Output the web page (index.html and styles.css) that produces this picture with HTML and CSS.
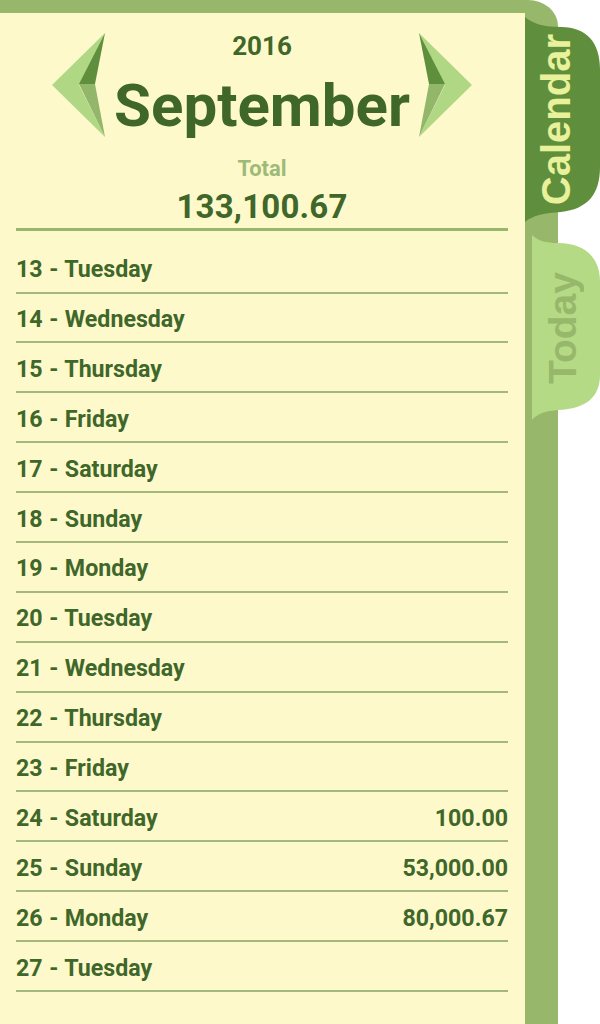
FILE: index.html
```html
<!DOCTYPE html>
<html lang="en">
<head>
<meta charset="utf-8">
<title>Calendar</title>
<link rel="stylesheet" href="styles.css">
</head>
<body>
<main class="panel">
  <header class="head">
    <div class="month-row">
      <svg class="arrow" viewBox="0 0 54 104" aria-hidden="true">
        <polygon points="53,0 0,52 53,104 27,52" fill="#b0d884"/>
        <polygon points="53,0 27,51 43,51" fill="#5f8f3c"/>
        <polygon points="53,104 27,51 43,51" fill="#92b66a"/>
      </svg>
      <div class="titles">
        <div class="year">2016</div>
        <div class="month">September</div>
      </div>
      <svg class="arrow" viewBox="0 0 54 104" aria-hidden="true">
        <polygon points="1,0 54,52 1,104 27,52" fill="#b0d884"/>
        <polygon points="1,0 27,51 11,51" fill="#5f8f3c"/>
        <polygon points="1,104 27,51 11,51" fill="#92b66a"/>
      </svg>
    </div>
    <div class="total-label">Total</div>
    <div class="total">133,100.67</div>
  </header>
  <ul class="days">
    <li class="day"><span>13 - Tuesday</span></li>
    <li class="day"><span>14 - Wednesday</span></li>
    <li class="day"><span>15 - Thursday</span></li>
    <li class="day"><span>16 - Friday</span></li>
    <li class="day"><span>17 - Saturday</span></li>
    <li class="day"><span>18 - Sunday</span></li>
    <li class="day"><span>19 - Monday</span></li>
    <li class="day"><span>20 - Tuesday</span></li>
    <li class="day"><span>21 - Wednesday</span></li>
    <li class="day"><span>22 - Thursday</span></li>
    <li class="day"><span>23 - Friday</span></li>
    <li class="day"><span>24 - Saturday</span><span>100.00</span></li>
    <li class="day"><span>25 - Sunday</span><span>53,000.00</span></li>
    <li class="day"><span>26 - Monday</span><span>80,000.67</span></li>
    <li class="day"><span>27 - Tuesday</span></li>
  </ul>
</main>
<div class="tab tab-calendar">
  <svg class="tab-shape" viewBox="0 0 75 205" aria-hidden="true">
    <path d="M0,0 C8,7 20,10 36,10 C62,10 75,26 75,52 L75,150 C75,178 62,192 36,195 C20,196 8,198 0,205 Z" fill="#5f8f3c"/>
  </svg>
  <span class="tab-text">Calendar</span>
</div>
<div class="tab tab-today">
  <svg class="tab-shape" viewBox="0 0 68 185" aria-hidden="true">
    <path d="M0,0 C6,6 14,8 26,8 C54,8 68,24 68,46 L68,140 C68,162 54,174 26,175 C14,176 6,178 0,185 Z" fill="#b5da85"/>
  </svg>
  <span class="tab-text">Today</span>
</div>
</body>
</html>
```
FILE: styles.css
```css
* { box-sizing: border-box; }
html, body { margin: 0; padding: 0; background: #fff; }
body { width: 600px; height: 1024px; overflow: hidden; position: relative; font-family: Roboto, "Liberation Sans", sans-serif; }
.panel {
  width: 558px; height: 1024px;
  background: #fef9cb;
  border-top: 13px solid #97b86b;
  border-right: 33px solid #97b86b;
  border-top-right-radius: 30px 26px;
  color: #40672a;
  padding: 0 17px 0 16px;
}
.head { text-align: center; border-bottom: 3px solid #97b86b; height: 218px; }
.month-row { display: flex; justify-content: space-between; align-items: flex-start; padding: 20px 36px 0 36px; height: 132px; }
.arrow { width: 54px; height: 104px; flex: none; }
.titles { margin: -2px -20px 0; }
.year { font-size: 26px; font-weight: 700; line-height: 30px; }
.month { font-size: 60px; font-weight: 700; line-height: 66px; margin-top: 12px; white-space: nowrap; }
.total-label { font-size: 22px; font-weight: 700; color: #9dbb78; line-height: 26px; margin-top: 11px; }
.total { font-size: 33px; font-weight: 700; line-height: 40px; letter-spacing: .2px; margin-top: 5px; }
.days { list-style: none; margin: 0; padding: 0; }
.day {
  display: flex; justify-content: space-between; align-items: center;
  height: 49.9px;
  border-bottom: 2px solid #a3b87a;
  font-size: 23.2px; font-weight: 700; word-spacing: .8px;
  padding-top: 25px; padding-bottom: 22px;
  color: #40672a;
}
.day:first-child { height: 62.5px; padding-top: 38px; padding-bottom: 22.5px; }
.tab { position: absolute; display: flex; align-items: center; justify-content: center; }
.tab-calendar { top: 17px; left: 525px; width: 75px; height: 205px; }
.tab-today { top: 235px; left: 532px; width: 68px; height: 185px; }
.tab-shape { position: absolute; inset: 0; width: 100%; height: 100%; }
.tab-text {
  position: relative;
  writing-mode: vertical-rl; transform: rotate(180deg);
  font-family: "Liberation Sans", Arial, sans-serif;
  font-weight: 700; font-size: 40px; line-height: 1;
}
.tab-calendar .tab-text { color: #e9f19b; margin-left: -14px; }
.tab-today .tab-text { color: #97b86b; margin-left: -8px; font-size: 39px; }
```
